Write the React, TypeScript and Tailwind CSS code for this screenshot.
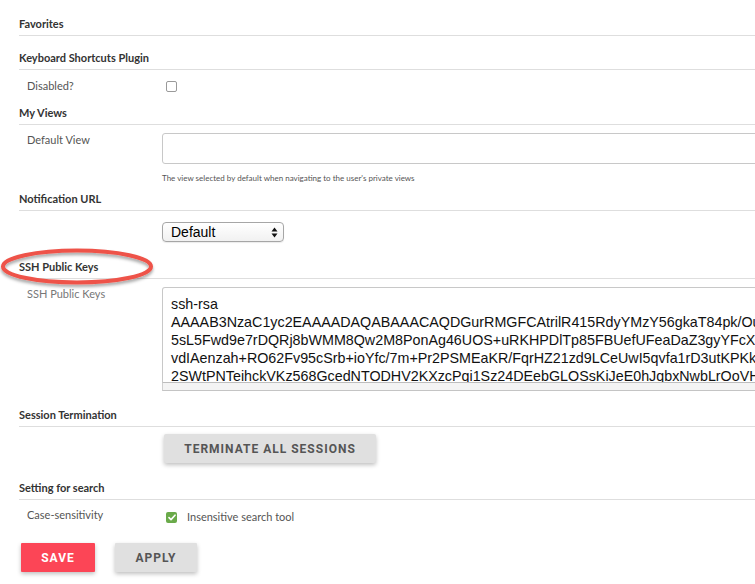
import React from "react";

const lato = { fontFamily: "Lato, 'Open Sans', sans-serif" } as const;

function Heading({ children, mt }: { children: React.ReactNode; mt: string }) {
  return (
    <div className={`${mt} ml-[19px] border-b border-[#dedede] pb-[4px]`}>
      <div className="h-[14px] text-[11px] leading-[14px] font-bold text-[#333]">{children}</div>
    </div>
  );
}

function Label({ children, className = "" }: { children: React.ReactNode; className?: string }) {
  return (
    <div className={`w-[162px] shrink-0 pl-[27px] text-[11px] leading-[14px] text-[#555] ${className}`}>{children}</div>
  );
}

const keyLines = [
  "ssh-rsa",
  "AAAAB3NzaC1yc2EAAAADAQABAAACAQDGurRMGFCAtrilR415RdyYMzY56gkaT84pk/Ou7aQ1",
  "5sL5Fwd9e7rDQRj8bWMM8Qw2M8PonAg46UOS+uRKHPDlTp85FBUefUFeaDaZ3gyYFcXm1qR",
  "vdIAenzah+RO62Fv95cSrb+ioYfc/7m+Pr2PSMEaKR/FqrHZ21zd9LCeUwI5qvfa1rD3utKPKk0+Ab",
  "2SWtPNTeihckVKz568GcedNTODHV2KXzcPqi1Sz24DEebGLOSsKiJeE0hJqbxNwbLrOoVHq7",
];

export default function App() {
  return (
    <div className="relative h-[584px] w-[755px] overflow-hidden bg-white" style={lato}>
      <div className="w-[1000px]">
        <Heading mt="mt-[17px]">Favorites</Heading>
        <Heading mt="mt-[15px]">Keyboard Shortcuts Plugin</Heading>
        <div className="mt-[10px] flex h-[12px] items-center">
          <Label>Disabled?</Label>
          <div className="ml-[4px] h-[11px] w-[11px] rounded-[2px] border border-[#9a9a9a] bg-white" />
        </div>

        <Heading mt="mt-[14px]">My Views</Heading>
        <div className="mt-[8px] flex items-start">
          <Label>Default View</Label>
          <div className="h-[31px] flex-1 rounded-[3px] border border-[#c8c8c8] bg-white" />
        </div>
        <div className="ml-[162px] mt-[9px] h-[10px] text-[8px] leading-[10px] text-[#555]">
          The view selected by default when navigating to the user's private views
        </div>

        <Heading mt="mt-[9px]">Notification URL</Heading>
        <div className="ml-[162px] mt-[11px] flex h-[20px] w-[122px] items-center justify-between rounded-[4px] border border-[#a6a6a6] bg-gradient-to-b from-white to-[#f1f1f1] pl-[8px] pr-[5px] shadow-[0_1px_1px_rgba(0,0,0,0.08)]">
          <span className="text-[14px] leading-[16px] text-black" style={{ fontFamily: "'Liberation Sans', Arial, sans-serif" }}>
            Default
          </span>
          <svg width="7" height="11" viewBox="0 0 7 11">
            <path d="M3.5 0.5 L6.5 4.5 H0.5 Z" fill="#111" />
            <path d="M3.5 10.5 L6.5 6.5 H0.5 Z" fill="#111" />
          </svg>
        </div>

        <Heading mt="mt-[18px]">SSH Public Keys</Heading>
        <div className="mt-[8px] flex items-start">
          <Label className="text-[#777]">SSH Public Keys</Label>
          <div className="flex-1">
            <div
              className="h-[95px] overflow-hidden rounded-tl-[3px] border border-b-0 border-[#c8c8c8] bg-white pl-[8px] pt-[7px] text-[14.3px] leading-[18px] text-[#111]"
              style={{ fontFamily: "'Liberation Sans', Arial, sans-serif" }}
            >
              {keyLines.map((l, i) => (
                <div key={i} className="whitespace-nowrap">
                  {l}
                </div>
              ))}
            </div>
            <div className="h-[9px] border border-t-[#bdbdbd] border-x-[#d0d0d0] border-b-[#c4c4c4] bg-[#f4f4f4]" />
          </div>
        </div>

        <Heading mt="mt-[17px]">Session Termination</Heading>
        <div className="ml-[164px] mt-[7px]">
          <button
            className="flex h-[29px] w-[212px] items-center justify-center rounded-[2px] bg-[#e0e0e0] text-[12px] font-bold tracking-[1px] text-[#555] shadow-[0_2px_4px_rgba(0,0,0,0.25)]"
            style={{ fontFamily: "Roboto, 'Liberation Sans', sans-serif" }}
          >
            TERMINATE ALL SESSIONS
          </button>
        </div>

        <Heading mt="mt-[18px]">Setting for search</Heading>
        <div className="mt-[11px] flex h-[12px] items-center">
          <Label className="relative top-[-2px]">Case-sensitivity</Label>
          <div className="ml-[4px] flex h-[11px] w-[11px] items-center justify-center rounded-[2px] bg-[#6aaa4a]">
            <svg width="8" height="7" viewBox="0 0 8 7">
              <path d="M1 3.6 L3 5.6 L7 1.2" fill="none" stroke="#fff" strokeWidth="1.6" strokeLinecap="round" strokeLinejoin="round" />
            </svg>
          </div>
          <span className="ml-[10px] text-[11px] leading-[14px] text-[#555]">Insensitive search tool</span>
        </div>

        <div className="ml-[21px] mt-[20px] flex gap-[20px]" style={{ fontFamily: "Roboto, 'Liberation Sans', sans-serif" }}>
          <button className="flex h-[29px] w-[74px] items-center justify-center rounded-[1px] bg-[#fc4556] text-[12px] font-bold tracking-[1px] text-white shadow-[0_2px_4px_rgba(0,0,0,0.25)]">
            SAVE
          </button>
          <button className="flex h-[29px] w-[82px] items-center justify-center rounded-[1px] bg-[#e0e0e0] text-[12px] font-bold tracking-[1px] text-[#555] shadow-[0_2px_4px_rgba(0,0,0,0.25)]">
            APPLY
          </button>
        </div>
      </div>

      <svg className="pointer-events-none absolute left-0 top-[246px]" width="160" height="46" viewBox="0 0 160 46">
        <defs>
          <filter id="sh" x="-10%" y="-30%" width="120%" height="170%">
            <feDropShadow dx="0" dy="2.5" stdDeviation="1.5" floodColor="#000" floodOpacity="0.35" />
          </filter>
        </defs>
        <ellipse cx="77" cy="20.5" rx="74" ry="16" fill="none" stroke="#ee5349" strokeWidth="4" filter="url(#sh)" />
      </svg>
    </div>
  );
}
